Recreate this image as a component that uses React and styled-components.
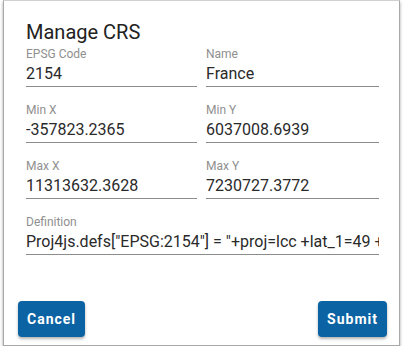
import styled, { createGlobalStyle } from "styled-components";

const GlobalStyle = createGlobalStyle`
  body {
    margin: 0;
    background: #ffffff;
    font-family: Roboto, "Liberation Sans", sans-serif;
  }
`;

export const Dialog = styled.div`
  box-sizing: border-box;
  display: flex;
  flex-direction: column;
  width: 397px;
  height: 346px;
  margin: 0 0 0 3px;
  border: 1px solid #a8a8a8;
  border-top-color: #d0d0d0;
  background: #ffffff;
  box-shadow: 0 2px 3px rgba(0, 0, 0, 0.35);
`;

export const Body = styled.div`
  padding: 19px 20px 0 22px;
`;

export const Title = styled.h2`
  margin: 0 0 3px 0;
  font-size: 20px;
  line-height: 24px;
  font-weight: 400;
  color: #222222;
`;

export const Grid = styled.div`
  display: grid;
  grid-template-columns: 171px 1fr;
  column-gap: 9px;
  row-gap: 16px;
`;

export const Field = styled.label`
  display: flex;
  flex-direction: column;
  grid-column: ${(p) => (p.wide ? "1 / span 2" : "auto")};
`;

export const Label = styled.span`
  font-size: 12px;
  line-height: 14px;
  color: #8f8f8f;
`;

export const Input = styled.input`
  box-sizing: border-box;
  width: 100%;
  height: 26px;
  margin: 0;
  padding: 0;
  border: none;
  border-bottom: 1px solid #8c8c8c;
  background: transparent;
  outline: none;
  font-family: Roboto, "Liberation Sans", sans-serif;
  font-size: 16px;
  line-height: 25px;
  color: #2a2a2a;
`;

export const Footer = styled.div`
  display: flex;
  justify-content: space-between;
  align-items: center;
  margin-top: auto;
  padding: 0 12px 8px 14px;
`;

export const Button = styled.button`
  height: 36px;
  padding: 0 9px;
  border: none;
  border-radius: 4px;
  background: #0c63a3;
  color: #ffffff;
  font-family: Roboto, "Liberation Sans", sans-serif;
  font-size: 14px;
  font-weight: 700;
  letter-spacing: 1px;
  box-shadow: 0 2px 3px rgba(0, 0, 0, 0.3);
  cursor: pointer;
`;

const fields = [
  { label: "EPSG Code", value: "2154" },
  { label: "Name", value: "France" },
  { label: "Min X", value: "-357823.2365" },
  { label: "Min Y", value: "6037008.6939" },
  { label: "Max X", value: "11313632.3628" },
  { label: "Max Y", value: "7230727.3772" },
  {
    label: "Definition",
    value:
      'Proj4js.defs["EPSG:2154"] = "+proj=lcc +lat_1=49 +lat_2=44 +lat_0=46.5 +lon_0=3 +x_0=700000 +y_0=6600000 +ellps=GRS80 +towgs84=0,0,0,0,0,0,0 +units=m +no_defs";',
    wide: true,
  },
];

const App = () => {
  return (
    <>
      <GlobalStyle />
      <Dialog>
        <Body>
          <Title>Manage CRS</Title>
          <Grid>
            {fields.map((f) => (
              <Field key={f.label} wide={f.wide}>
                <Label>{f.label}</Label>
                <Input readOnly value={f.value} />
              </Field>
            ))}
          </Grid>
        </Body>
        <Footer>
          <Button>Cancel</Button>
          <Button>Submit</Button>
        </Footer>
      </Dialog>
    </>
  );
};

export default App;
